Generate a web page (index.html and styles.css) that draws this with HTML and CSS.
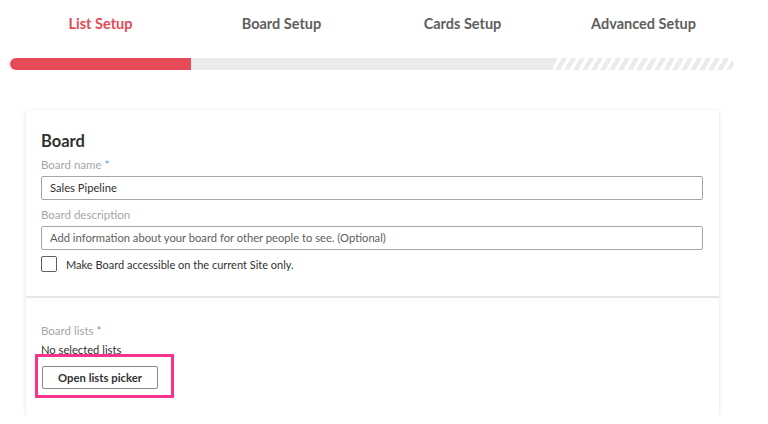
FILE: index.html
```html
<!DOCTYPE html>
<html lang="en">
<head>
<meta charset="utf-8">
<title>Board Setup</title>
<link rel="stylesheet" href="styles.css">
</head>
<body>
<div class="wizard">
  <div class="steps">
    <div class="step active">List Setup</div>
    <div class="step">Board Setup</div>
    <div class="step">Cards Setup</div>
    <div class="step">Advanced Setup</div>
  </div>
  <div class="progress">
    <div class="seg done"></div>
    <div class="seg todo"></div>
    <div class="seg todo"></div>
    <div class="seg hatch"></div>
  </div>
</div>

<div class="card">
  <section class="section">
    <h2 class="title">Board</h2>
    <label class="label">Board name <span class="req">*</span></label>
    <div class="input">Sales Pipeline</div>
    <label class="label">Board description</label>
    <div class="input placeholder">Add information about your board for other people to see. (Optional)</div>
    <div class="check">
      <span class="box"></span>
      <span class="check-text">Make Board accessible on the current Site only.</span>
    </div>
  </section>
  <section class="section lower">
    <label class="label">Board lists <span class="req">*</span></label>
    <div class="value">No selected lists</div>
    <div class="highlight">
      <button class="btn">Open lists picker</button>
    </div>
  </section>
</div>
</body>
</html>
```

FILE: styles.css
```css
* { box-sizing: border-box; }

body {
  margin: 0;
  background: #ffffff;
  font-family: Lato, "Noto Sans", "Liberation Sans", sans-serif;
  color: #323130;
}

.wizard {
  width: 724px;
  margin-left: 10px;
}

.steps {
  display: grid;
  grid-template-columns: repeat(4, 1fr);
  padding-top: 13px;
  height: 58px;
}

.step {
  text-align: center;
  font-size: 14.5px;
  line-height: 22px;
  font-weight: 700;
  color: #605e5c;
}

.step.active { color: #e64a57; }

.progress {
  display: grid;
  grid-template-columns: repeat(4, 1fr);
  height: 12px;
}

.seg.done {
  background: #e64a57;
  border-radius: 6px 0 0 6px;
}

.seg.todo { background: #ebebeb; }

.seg.hatch {
  border-radius: 0 6px 6px 0;
  background: repeating-linear-gradient(
    120deg,
    #ebebeb 0px,
    #ebebeb 4.5px,
    #ffffff 4.5px,
    #ffffff 7.8px
  );
}

.card {
  margin: 40px 0 0 26px;
  width: 693px;
  background: #fff;
  box-shadow: 0 1px 4px rgba(0, 0, 0, 0.13);
  border-radius: 2px;
}

.section {
  padding: 19px 16px 24px 15px;
  display: flex;
  flex-direction: column;
}

.section.lower {
  border-top: 2px solid #e6e6e6;
  padding-top: 22px;
  padding-bottom: 17px;
}

.title {
  margin: 0;
  font-size: 16.5px;
  line-height: 25px;
  font-weight: 700;
  color: #323130;
}

.label {
  font-size: 11.5px;
  line-height: 20px;
  color: #a6a6a6;
  margin-top: 1px;
  margin-bottom: 1px;
}

.lower .label { margin-bottom: 0; }

.req { color: #5c9ad6; }

.input {
  height: 24px;
  border: 1px solid #a6a6a6;
  border-radius: 2px;
  padding: 0 8px;
  font-size: 11.2px;
  line-height: 22px;
  color: #323130;
  margin-bottom: 4px;
}

.input.placeholder { color: #605e5c; }

.check {
  display: flex;
  align-items: center;
  gap: 9px;
  margin-top: 2px;
}

.box {
  width: 16px;
  height: 16px;
  border: 1px solid #605e5c;
  border-radius: 2px;
}

.check-text {
  font-size: 11px;
  color: #323130;
}

.value {
  font-size: 11.2px;
  line-height: 16px;
  margin-top: 1px;
  color: #323130;
}

.highlight {
  align-self: flex-start;
  margin: -4px 0 0 -6px;
  border: 3px solid #f7338f;
  padding: 9px 13px 6px 4px;
}

.btn {
  display: block;
  width: 116px;
  height: 23px;
  background: #fff;
  border: 1px solid #8a8886;
  border-radius: 2px;
  font-family: inherit;
  font-size: 11.3px;
  font-weight: 700;
  color: #323130;
  padding: 0;
}
```
